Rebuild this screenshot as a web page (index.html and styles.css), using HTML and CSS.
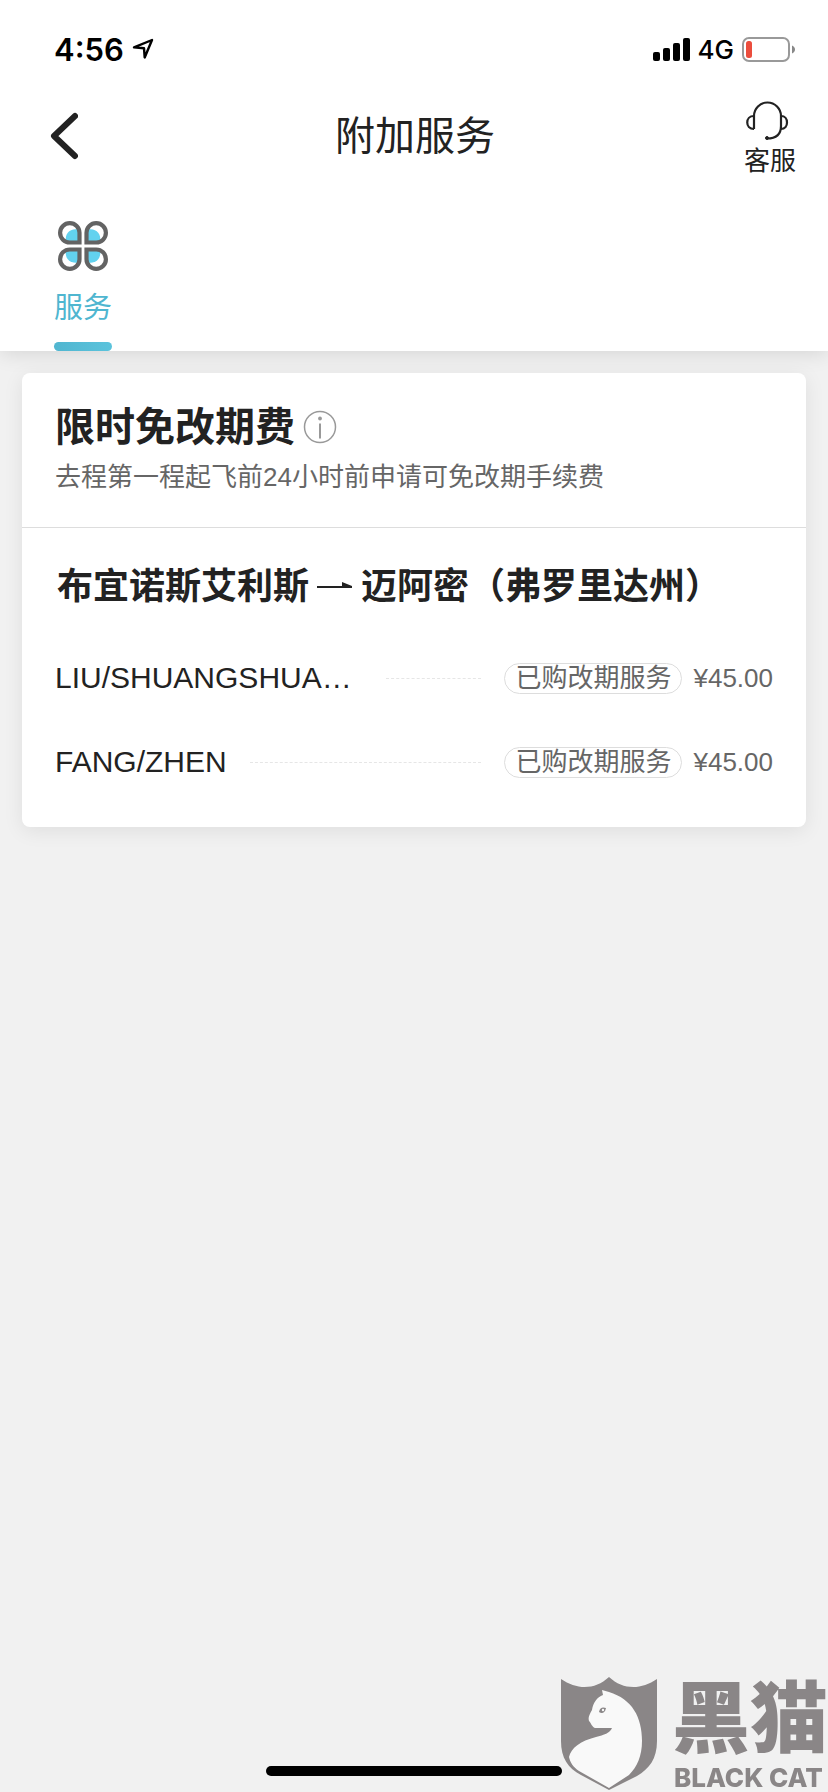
FILE: index.html
```html
<!DOCTYPE html>
<html lang="zh-CN">
<head>
    <meta charset="UTF-8">
    <meta name="viewport" content="width=device-width, initial-scale=1">
    <title>附加服务</title>
    <link rel="stylesheet" href="styles.css">
</head>
<body>
<header class="top">
    <div class="status">
        <div class="status_left">
            <span class="time">4:56</span>
            <svg width="22" height="22" viewBox="0 0 22 22"><path d="M2 9.3 20 2l-7.3 17.500-.7-9.300z" fill="none" stroke="#000" stroke-width="2.4" stroke-linejoin="round"/></svg>
        </div>
        <div class="status_right">
            <svg width="37" height="23" viewBox="0 0 37 23">
                <rect x="0" y="14" width="7" height="9" rx="2"/>
                <rect x="10" y="10" width="7" height="13" rx="2"/>
                <rect x="20" y="5" width="7" height="18" rx="2"/>
                <rect x="30" y="0" width="7" height="23" rx="2"/>
            </svg>
            <span class="net">4G</span>
            <svg width="53" height="25" viewBox="0 0 53 25">
                <rect x="1" y="1" width="46" height="23" rx="6" fill="none" stroke="#999" stroke-width="2"/>
                <rect x="4" y="4" width="6" height="17" rx="2.5" fill="#eb4d3d"/>
                <path d="M50 8.5c4 1.800 4 6.200 0 8z" fill="#888"/>
            </svg>
        </div>
    </div>
    <div class="nav">
        <button class="back" type="button" aria-label="返回">
            <svg width="28" height="48" viewBox="0 0 28 48"><path d="M25 4 4 24 25 44" fill="none" stroke="#222" stroke-width="6" stroke-linecap="round" stroke-linejoin="round"/></svg>
        </button>
        <h1>附加服务</h1>
        <button class="kefu" type="button">
            <svg width="50" height="40" viewBox="0 0 50 40" fill="none" stroke="#222" stroke-width="2.200">
                <path d="M9 28V15a13.500 13.500 0 0 1 27 0v10c0 8-5 12.500-14 12.500"/>
                <path d="M9 28c-9 0-9-13 0-13M36 15c8 0 8 13 0 13"/>
                <circle cx="22" cy="37" r="1.500" fill="#222" stroke-width="1"/>
            </svg>
            <span>客服</span>
        </button>
    </div>
    <nav class="tabs">
        <a class="tab" href="#card">
            <svg width="52" height="52" viewBox="0 0 52 52">
                <g id="leaf">
                    <path d="M21 21V9.500C13 8 7.500 14 9 21z" fill="#62d2ef"/>
                    <path d="M22.500 22.500H12.800A9.700 9.700 0 1 1 22.500 12.800z" fill="none" stroke="#636363" stroke-width="4.200"/>
                </g>
                <use href="#leaf" transform="matrix(-1 0 0 1 52 0)"/>
                <use href="#leaf" transform="matrix(1 0 0 -1 0 52)"/>
                <use href="#leaf" transform="matrix(-1 0 0 -1 52 52)"/>
            </svg>
            <span>服务</span>
        </a>
    </nav>
</header>

<main class="card" id="card">
    <section class="card_top">
        <h2>
            限时免改期费
            <svg width="34" height="34" viewBox="0 0 34 34">
                <circle cx="17" cy="17" r="15.500" fill="none" stroke="#999" stroke-width="1.500"/>
                <circle cx="17" cy="8.500" r="1.900" fill="#999"/>
                <path d="M17 13.500v15" stroke="#999" stroke-width="2"/>
            </svg>
        </h2>
        <p>去程第一程起飞前24小时前申请可免改期手续费</p>
    </section>
    <section class="card_main">
        <h3>
            <span>布宜诺斯艾利斯</span>
            <svg width="36" height="10" viewBox="0 0 36 10"><path d="M0 4h25V0l10 4v2H0z" fill="#222"/></svg>
            <span>迈阿密（弗罗里达州）</span>
        </h3>
        <ul class="list">
            <li>
                <span class="name name_long">LIU/SHUANGSHUA…</span>
                <i class="dots"></i>
                <span class="tag">已购改期服务</span>
                <span class="price">¥45.00</span>
            </li>
            <li>
                <span class="name">FANG/ZHEN</span>
                <i class="dots"></i>
                <span class="tag">已购改期服务</span>
                <span class="price">¥45.00</span>
            </li>
        </ul>
    </section>
</main>

<div class="home"></div>
<div class="mark">
    <svg width="98" height="115" viewBox="0 0 98 115">
        <path d="M1 3c16 11 34 11 48-2 14 13 32 13 48 2v62c0 18-8 28-20 35l-28 14-28-15C8 92 1 82 1 65z" fill="#8a8687"/>
        <path d="M42 14l1 5c-6 2-10 8-11 15-3 5-4 8-3 11 2 2 3 6 6 7h17c-2 5-8 7-16 9-16 4-25 11-27 20 1 5 4 10 10 14l30 17 20-13c8-8 13-19 13-34 0-24-10-42-33-49z" fill="#f9f9f9"/>
        <path d="M39 36c1-5 4-5 7-4-1 5-4 6-7 4z" fill="#8a8687"/>
        <circle cx="43" cy="34" r="1.200" fill="#f9f9f9"/>
    </svg>
    <div class="mark_text">
        <strong>黑猫</strong>
        <span>BLACK CAT</span>
    </div>
</div>
</body>
</html>
```

FILE: styles.css
```css
*{
    margin: 0;
    padding: 0;
    box-sizing: border-box;
    list-style: none;
}
body{
    min-height: 100vh;
    background-color: #f1f1f1;
    color: #222;
    font-family: "Liberation Sans", "Noto Sans CJK SC", sans-serif;
}
svg{
    display: block;
    flex: none;
}
button{
    border: none;
    background: none;
    color: inherit;
    font-family: inherit;
    cursor: pointer;
}
.top{
    background-color: #fff;
    box-shadow: 0 2px 20px rgba(0,0,0,.12);
}

/* 状态栏 */
.status{
    display: flex;
    justify-content: space-between;
    align-items: center;
    height: 88px;
    padding: 10px 33px 0 54px;
    color: #000;
    font-family: Inter, sans-serif;
}
.status_left,
.status_right{
    display: flex;
    align-items: center;
    gap: 8px;
}
.time{
    font-size: 31px;
    font-weight: 600;
}
.net{
    font-size: 26px;
    font-weight: 500;
}

/* 导航 */
.nav{
    display: grid;
    grid-template-columns: 1fr auto 1fr;
    align-items: center;
    height: 96px;
    padding: 0 32px 0 50px;
}
.nav h1{
    padding-right: 16px;
    font-size: 40px;
    font-weight: 400;
    line-height: 60px;
}
.back{
    justify-self: start;
}
.kefu{
    justify-self: end;
    display: flex;
    flex-direction: column;
    align-items: center;
    padding-top: 10px;
    font-size: 26px;
    line-height: 40px;
}

.tabs{
    display: flex;
    padding: 36px 54px 0;
}
.tab{
    display: flex;
    flex-direction: column;
    align-items: center;
    color: #4fb6d0;
    font-size: 29px;
    line-height: 44px;
    text-decoration: none;
}
.tab span{
    margin-top: 14px;
}
.tab:after{
    content: "";
    width: 100%;
    height: 9px;
    margin-top: 12px;
    border-radius: 5px;
    background: linear-gradient(90deg, #51b6d0, #5bc3dc);
}

/* 卡片 */
.card{
    margin: 22px;
    border-radius: 8px;
    background-color: #fff;
    box-shadow: 0 4px 20px rgba(0,0,0,.08);
}
.card_top{
    padding: 24px 33px 30px;
    border-bottom: 1px solid #ddd;
}
.card_top h2{
    display: flex;
    align-items: center;
    gap: 8px;
    font-size: 40px;
    line-height: 60px;
}
.card_top p{
    color: #666;
    font-size: 26px;
    line-height: 40px;
}
.card_main{
    padding: 32px 33px 23px;
}
.card_main h3{
    display: flex;
    align-items: center;
    gap: 8px;
    padding-left: 2px;
    font-size: 36px;
    line-height: 54px;
}
.list{
    padding-top: 22px;
}
.list li{
    display: flex;
    align-items: center;
    height: 84px;
}
.name{
    font-size: 30px;
    line-height: 40px;
    white-space: nowrap;
}
.name_long{
    width: 308px;
}
.dots{
    flex: 1;
    margin: 0 23px;
    border-top: 1px dashed #e6e6e6;
}
.tag{
    padding: 0 10px;
    border: 1px solid #ddd;
    border-radius: 16px;
    color: #666;
    font-size: 26px;
    line-height: 29px;
}
.price{
    margin-left: 11px;
    color: #666;
    font-size: 26px;
}

.home{
    position: fixed;
    left: 50%;
    bottom: 16px;
    width: 296px;
    height: 10px;
    margin-left: -148px;
    border-radius: 5px;
    background-color: #000;
}
/* 水印 */
.mark{
    position: fixed;
    right: 0;
    bottom: 0;
    display: flex;
    gap: 14px;
    color: #8a8687;
}
.mark_text{
    display: flex;
    flex-direction: column;
    justify-content: flex-end;
}
.mark_text strong{
    font-size: 78px;
    font-weight: 900;
    line-height: 88px;
}
.mark_text span{
    padding-left: 2px;
    font-family: Inter, sans-serif;
    font-size: 26px;
    font-weight: 800;
    line-height: 28px;
}
```
